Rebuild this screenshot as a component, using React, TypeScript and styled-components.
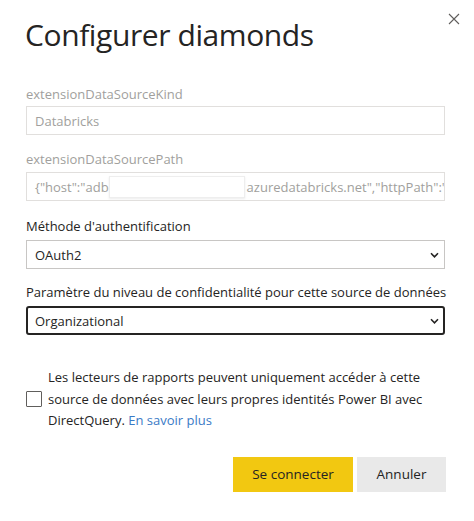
import styled, { createGlobalStyle } from "styled-components";

const GlobalStyle = createGlobalStyle`
  html, body {
    margin: 0;
    padding: 0;
    background: #ffffff;
  }
  body {
    font-family: "Open Sans", "Noto Sans", Arial, sans-serif;
    color: #252423;
  }
`;

const Dialog = styled.div`
  width: 474px;
  height: 521px;
  box-sizing: border-box;
  padding: 0 29px 0 26px;
  display: flex;
  flex-direction: column;
`;

const Header = styled.div`
  display: flex;
  justify-content: space-between;
  align-items: flex-start;
  height: 70px;
`;

const Title = styled.h1`
  margin: 14px 0 0 -1px;
  font-size: 30px;
  font-weight: 400;
  line-height: 42px;
  color: #252423;
  letter-spacing: -0.4px;
`;

const CloseButton = styled.button`
  margin: 9px -19px 0 0;
  width: 20px;
  height: 20px;
  padding: 0;
  border: none;
  background: transparent;
  display: flex;
  align-items: center;
  justify-content: center;
`;

const Field = styled.div<{ $top: number }>`
  display: flex;
  flex-direction: column;
  margin-top: ${({ $top }) => $top}px;
`;

const Label = styled.label<{ $muted?: boolean; $gap: number }>`
  font-size: 13px;
  line-height: 20px;
  color: ${({ $muted }) => ($muted ? "#a19f9d" : "#252423")};
  margin-bottom: ${({ $gap }) => $gap}px;
  white-space: nowrap;
`;

const TextBox = styled.div`
  height: 29px;
  box-sizing: border-box;
  border: 1px solid #e1dfdd;
  padding: 0 8px;
  display: flex;
  align-items: center;
  font-size: 13px;
  color: #a19f9d;
  white-space: nowrap;
  overflow: hidden;
`;

const Redacted = styled.span`
  display: inline-block;
  width: 134px;
  height: 20px;
  margin: 0 2px 0 0;
  background: #ffffff;
  border: 1px solid #eeeeee;
  box-shadow: 0 1px 2px rgba(0, 0, 0, 0.08);
  flex-shrink: 0;
`;

const Select = styled.div<{ $focused?: boolean }>`
  height: 29px;
  box-sizing: border-box;
  border: ${({ $focused }) => ($focused ? "2px solid #252423" : "1px solid #c8c6c4")};
  border-radius: ${({ $focused }) => ($focused ? "3px" : "0")};
  padding: ${({ $focused }) => ($focused ? "0 4px 0 7px" : "0 5px 0 8px")};
  display: flex;
  align-items: center;
  justify-content: space-between;
  font-size: 13px;
  color: #252423;
`;

const CheckRow = styled.div`
  display: flex;
  align-items: center;
  margin-top: 32px;
`;

const CheckBox = styled.span`
  width: 16px;
  height: 16px;
  box-sizing: border-box;
  border: 1px solid #605e5c;
  border-radius: 1px;
  flex-shrink: 0;
  margin-right: 6px;
`;

const CheckText = styled.p`
  margin: 0;
  font-size: 13px;
  line-height: 21.5px;
  color: #252423;
`;

const Link = styled.a`
  color: #3a7ac6;
  text-decoration: none;
`;

const Actions = styled.div`
  display: flex;
  justify-content: flex-end;
  gap: 4px;
  margin-top: 25px;
  margin-right: -1px;
`;

const Button = styled.button<{ $primary?: boolean }>`
  height: 35px;
  padding: 0;
  width: ${({ $primary }) => ($primary ? "120px" : "89px")};
  border: none;
  background: ${({ $primary }) => ($primary ? "#f2c811" : "#e9e9e9")};
  font-family: "Open Sans", "Noto Sans", Arial, sans-serif;
  font-size: 13.5px;
  color: #252423;
`;

const Chevron = () => (
  <svg width="9" height="8" viewBox="0 0 9 8">
    <path d="M1 2.3 L4.5 5.8 L8 2.3" fill="none" stroke="#252423" strokeWidth="1.6" />
  </svg>
);

export default function App() {
  return (
    <>
      <GlobalStyle />
      <Dialog>
        <Header>
          <Title>Configurer diamonds</Title>
          <CloseButton aria-label="Fermer">
            <svg width="12" height="12" viewBox="0 0 12 12">
              <path d="M1 1 L11 11 M11 1 L1 11" stroke="#605e5c" strokeWidth="1.1" />
            </svg>
          </CloseButton>
        </Header>

        <Field $top={14}>
          <Label $muted $gap={2}>extensionDataSourceKind</Label>
          <TextBox>Databricks</TextBox>
        </Field>

        <Field $top={14}>
          <Label $muted $gap={3}>extensionDataSourcePath</Label>
          <TextBox>
            {'{"host":"adb'}
            <Redacted />
            {'azuredatabricks.net","httpPath":"\\'}
          </TextBox>
        </Field>

        <Field $top={15}>
          <Label $gap={4}>Méthode d'authentification</Label>
          <Select>
            OAuth2
            <Chevron />
          </Select>
        </Field>

        <Field $top={13}>
          <Label $gap={4}>Paramètre du niveau de confidentialité pour cette source de données</Label>
          <Select $focused>
            Organizational
            <Chevron />
          </Select>
        </Field>

        <CheckRow>
          <CheckBox />
          <CheckText>
            Les lecteurs de rapports peuvent uniquement accéder à cette source de données avec leurs
            propres identités Power BI avec DirectQuery. <Link href="#">En savoir plus</Link>
          </CheckText>
        </CheckRow>

        <Actions>
          <Button $primary>Se connecter</Button>
          <Button>Annuler</Button>
        </Actions>
      </Dialog>
    </>
  );
}
